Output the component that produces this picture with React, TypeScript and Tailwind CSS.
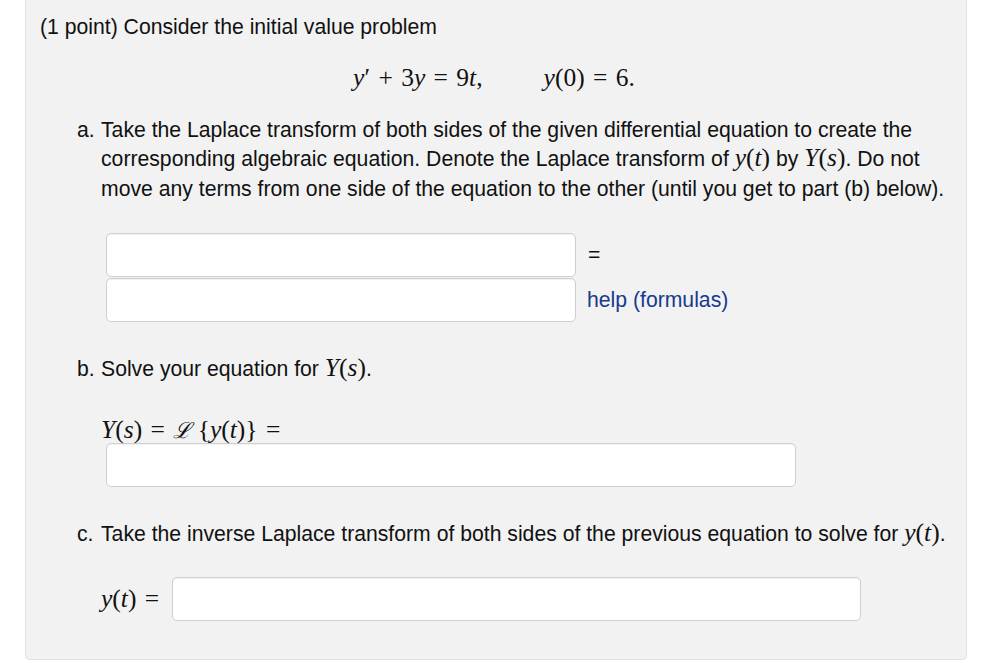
import React from "react";

const sans = { fontFamily: '"Liberation Sans", Arial, sans-serif' };

function V({ children }: { children: React.ReactNode }) {
  return <i className="italic">{children}</i>;
}

function Op({ children }: { children: React.ReactNode }) {
  return <span className="mx-[2px]">{children}</span>;
}

function M({ children, className = "" }: { children: React.ReactNode; className?: string }) {
  return (
    <span className={`font-['Liberation_Serif',serif] text-[25.5px] leading-none not-italic ${className}`}>
      {children}
    </span>
  );
}

function Field({ className = "" }: { className?: string }) {
  return (
    <div
      className={`h-[44px] rounded-[5px] border border-[#cfcfcf] bg-white shadow-[inset_0_1px_1px_rgba(0,0,0,0.06)] ${className}`}
    />
  );
}

export default function App() {
  return (
    <div className="min-h-[663px] bg-white text-[#111]" style={sans}>
      <div className="ml-[25px] w-[942px] rounded-b-[5px] border border-t-0 border-[#e0e0e0] bg-[#f2f2f2] pb-[38px] pl-[14px] pr-[18px] pt-[12px] text-[21.2px] leading-[29.5px]">
        <p>(1 point) Consider the initial value problem</p>

        <div className="mt-[21px] flex h-[29.5px] items-center justify-center gap-[61px]">
          <M>
            <V>y</V>′ <Op>+</Op> 3<V>y</V> <Op>=</Op> 9<V>t</V>,
          </M>
          <M>
            <V>y</V>(0) <Op>=</Op> 6.
          </M>
        </div>

        <div className="ml-[37px] mt-[22.5px] flex">
          <span className="w-[24px] shrink-0">a.</span>
          <p>
            Take the Laplace transform of both sides of the given differential equation to create the
            corresponding algebraic equation. Denote the Laplace transform of{" "}
            <M>
              <V>y</V>(<V>t</V>)
            </M>{" "}
            by{" "}
            <M>
              <V>Y</V>(<V>s</V>)
            </M>
            . Do not move any terms from one side of the equation to the other (until you get to part (b) below).
          </p>
        </div>

        <div className="ml-[66px] mt-[30px] flex flex-col gap-px">
          <div className="flex items-center">
            <Field className="w-[470px]" />
            <span className="ml-[12px]">=</span>
          </div>
          <div className="flex items-center">
            <Field className="w-[470px]" />
            <span className="ml-[11px] text-[#173a8c]">help (formulas)</span>
          </div>
        </div>

        <div className="ml-[37px] mt-[32px] flex">
          <span className="w-[24px] shrink-0">b.</span>
          <p>
            Solve your equation for{" "}
            <M>
              <V>Y</V>(<V>s</V>)
            </M>
            .
          </p>
        </div>

        <div className="ml-[61px] mt-[34px] flex h-[24px] items-center">
          <M>
            <V>Y</V>(<V>s</V>) <Op>=</Op>{" "}
            <span className="font-['DejaVu_Serif',serif] text-[22px] italic">ℒ</span> {"{"}
            <V>y</V>(<V>t</V>){"}"} <Op>=</Op>
          </M>
        </div>
        <Field className="ml-[66px] mt-[1px] w-[690px]" />

        <div className="ml-[37px] mt-[32px] flex">
          <span className="w-[24px] shrink-0">c.</span>
          <p>
            Take the inverse Laplace transform of both sides of the previous equation to solve for{" "}
            <M>
              <V>y</V>(<V>t</V>)
            </M>
            .
          </p>
        </div>

        <div className="ml-[61px] mt-[29px] flex items-center">
          <M>
            <V>y</V>(<V>t</V>) <Op>=</Op>
          </M>
          <Field className="ml-[11px] w-[689px]" />
        </div>
      </div>
    </div>
  );
}
